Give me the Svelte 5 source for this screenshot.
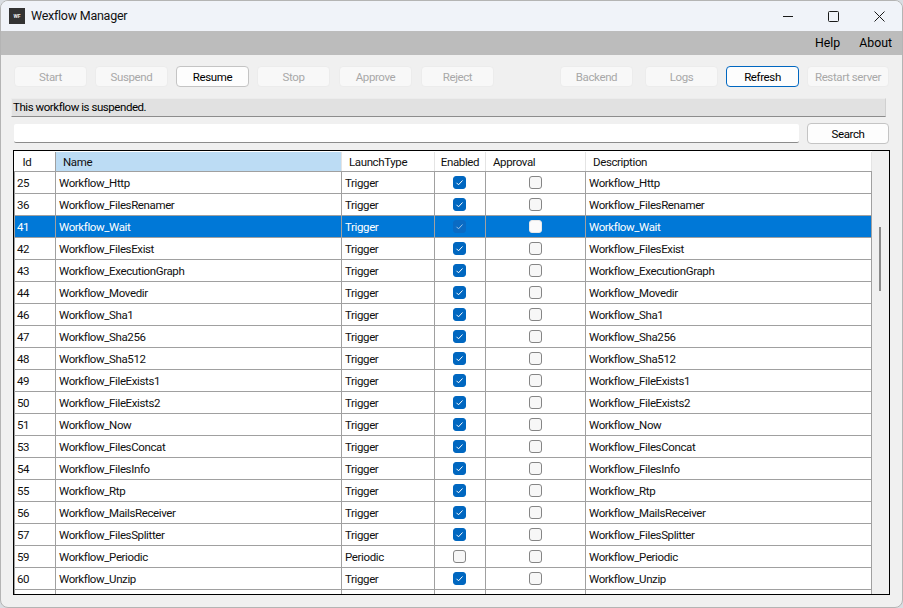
<script>
  const rows = [
    [25,'Workflow_Http','Trigger',true],[36,'Workflow_FilesRenamer','Trigger',true],[41,'Workflow_Wait','Trigger',true],
    [42,'Workflow_FilesExist','Trigger',true],[43,'Workflow_ExecutionGraph','Trigger',true],[44,'Workflow_Movedir','Trigger',true],
    [46,'Workflow_Sha1','Trigger',true],[47,'Workflow_Sha256','Trigger',true],[48,'Workflow_Sha512','Trigger',true],
    [49,'Workflow_FileExists1','Trigger',true],[50,'Workflow_FileExists2','Trigger',true],[51,'Workflow_Now','Trigger',true],
    [53,'Workflow_FilesConcat','Trigger',true],[54,'Workflow_FilesInfo','Trigger',true],[55,'Workflow_Rtp','Trigger',true],
    [56,'Workflow_MailsReceiver','Trigger',true],[57,'Workflow_FilesSplitter','Trigger',true],[59,'Workflow_Periodic','Periodic',false],
    [60,'Workflow_Unzip','Trigger',true]
  ];
</script>

<div class="window">
  <header class="title">
    <span class="logo">WF</span>
    <span class="name">Wexflow Manager</span>
    <svg class="controls" width="120" height="31" viewBox="0 0 120 31" fill="none" stroke="#1a1a1a" stroke-width="1">
      <path d="M4 15.5H14"/>
      <rect x="49.5" y="10.5" width="10" height="10" rx="1"/>
      <path d="M95.5 10.5L105.5 20.5M105.5 10.5L95.5 20.5"/>
    </svg>
  </header>
  <nav class="menu"><span>Help</span><span>About</span></nav>
  <main class="body">
    <div class="toolbar">
      <div class="group">
        <button disabled>Start</button>
        <button disabled>Suspend</button>
        <button>Resume</button>
        <button disabled>Stop</button>
        <button disabled class="wide-gap">Approve</button>
        <button disabled class="wide-gap">Reject</button>
      </div>
      <div class="group right">
        <button disabled>Backend</button>
        <button disabled class="wide-gap2">Logs</button>
        <button class="focus">Refresh</button>
        <button disabled class="restart">Restart server</button>
      </div>
    </div>
    <div class="status">This workflow is suspended.</div>
    <div class="search">
      <div class="input"></div>
      <button class="search-btn">Search</button>
    </div>
    <div class="grid">
      <div class="table">
        <div class="row head">
          <div class="c id">Id</div>
          <div class="c nm sel-head">Name</div>
          <div class="c lt">LaunchType</div>
          <div class="c en">Enabled</div>
          <div class="c ap">Approval</div>
          <div class="c ds">Description</div>
        </div>
        {#each rows as r}
          <div class="row" class:selected={r[0] === 41}>
            <div class="c id">{r[0]}</div>
            <div class="c nm">{r[1]}</div>
            <div class="c lt">{r[2]}</div>
            <div class="c en"><span class="cb" class:on={r[3]}>{#if r[3]}<svg width="13" height="13" viewBox="0 0 13 13" fill="none" stroke="#fff" stroke-width="1"><path d="M3.5 6.8L5.5 8.8L9.5 4.5"/></svg>{/if}</span></div>
            <div class="c ap"><span class="cb"></span></div>
            <div class="c ds">{r[1]}</div>
          </div>
        {/each}
        <div class="row tail">
          <div class="c id"></div><div class="c nm"></div><div class="c lt"></div><div class="c en"></div><div class="c ap"></div><div class="c ds"></div>
        </div>
      </div>
      <div class="scroll"><div class="thumb"></div></div>
    </div>
  </main>
</div>

<style>
  :global(body) { margin: 0; background: #d9dde2; }
  .window {
    width: 903px; height: 608px; box-sizing: border-box;
    display: flex; flex-direction: column; overflow: hidden;
    border: 1px solid #b4b4b4; border-radius: 8px;
    background: #f0f0f0; color: #000;
    font: 11.5px/16px Roboto, "Liberation Sans", sans-serif;
    letter-spacing: -0.38px;
  }
  .title {
    height: 30px; flex: none; background: #f0f3f9;
    display: flex; align-items: center; position: relative;
  }
  .logo {
    width: 16px; height: 16px; margin: 0 6px 0 8px; background: #333; color: #eee;
    font-size: 5px; font-weight: 700; line-height: 16px; text-align: center; letter-spacing: 0;
  }
  .name { font-size: 12.5px; color: #111; letter-spacing: -0.25px; }
  .controls { position: absolute; left: 778px; top: 0; }
  .menu {
    height: 24px; flex: none; background: #bcbcbc;
    display: flex; justify-content: flex-end; align-items: center; gap: 19px; padding-right: 10px;
    font-size: 12.3px; letter-spacing: 0;
  }
  .body { flex: 1; display: flex; flex-direction: column; padding: 11px 12px 0 10px; min-height: 0; }
  .toolbar { display: flex; justify-content: space-between; padding: 0 1px 0 3px; }
  .group { display: flex; gap: 8px; }
  button {
    width: 73px; height: 21px; padding: 0; box-sizing: border-box;
    font: inherit; letter-spacing: inherit; color: #000; background: #fdfdfd;
    border: 1px solid #c4c4c4; border-radius: 4px;
  }
  button:disabled { background: #f8f8f8; border-color: #ececec; color: #a8a8a8; }
  .wide-gap { margin-left: 1px; }
  .wide-gap2 { margin-left: 4px; }
  .focus { border-color: #0067c0; }
  .restart { width: 82px; }
  .status {
    margin-top: 11px; height: 19px; box-sizing: border-box; width: 875px;
    background: #e1e1e1; border: 1px solid #ececec; border-bottom-color: #8c8c8c; border-right-color: #d0d0d0;
    padding-left: 1px; line-height: 16px; color: #000; letter-spacing: -0.45px;
  }
  .search { display: flex; margin: 6px 0 0 3px; gap: 8px; align-items: center; }
  .input { width: 785px; height: 19px; box-sizing: border-box; background: #fff; border-bottom: 1px solid #8c8c8c; border-radius: 2px; }
  .search-btn { width: 82px; height: 21px; }
  .grid {
    margin: 6px 0 0 2px; width: 877px; height: 445px; box-sizing: border-box;
    border: 1px solid #000; display: flex; overflow: hidden; background: #f0f0f0;
  }
  .table { width: 858px; flex: none; background: #fff; padding-top: 1px; }
  .row {
    display: grid; grid-template-columns: 42px 286px 93px 51px 100px 286px;
    height: 22px; box-sizing: border-box; border-bottom: 1px solid #a0a0a0;
  }
  .c {
    border-right: 1px solid #a0a0a0; padding-left: 2px; line-height: 22px;
    white-space: nowrap; overflow: hidden; color: #101010;
  }
  .c.id { border-left: 1px solid #a0a0a0; }
  .c.nm, .c.lt, .c.ds { padding-left: 3px; }
  .c.en, .c.ap { padding: 0; display: flex; align-items: center; justify-content: center; }
  .c.en { padding-right: 2px; }
  .head { height: 20px; }
  .head .c { border-right-color: #e4e4e4; line-height: 20px; }
  .head .c.id { border-left-color: #fff; text-align: center; padding: 0 16px 0 0; border-right-color: #a0a0a0; }
  .head .c.nm { padding-left: 7px; }
  .head .c.lt { padding-left: 7px; }
  .head .c.ap { justify-content: flex-start; padding-left: 7px; }
  .head .c.ds { padding-left: 7px; }
  .head .c.en { padding-right: 0; }
  .sel-head { background: #bcdcf4; }
  .selected { background: #0078d7; }
  .selected .c { color: #fff; }
  .cb {
    width: 13px; height: 13px; box-sizing: border-box; border-radius: 3px;
    background: #f7f7f7; border: 1px solid #858585; display: block;
  }
  .cb svg { display: block; margin: -1px; }
  .cb.on { background: #0067c0; border-color: #0067c0; }
  .selected .cb { background: #fbfbfb; border-color: #e8e8e8; }
  .selected .cb.on { background: #0a6bc4; border-color: #0a6bc4; }
  .selected .cb.on svg { opacity: .6; }
  .tail { height: 10px; border: 0; }
  .scroll { flex: 1; position: relative; }
  .thumb { position: absolute; left: 7px; top: 76px; width: 2px; height: 64px; background: #8a8a8a; }
</style>
